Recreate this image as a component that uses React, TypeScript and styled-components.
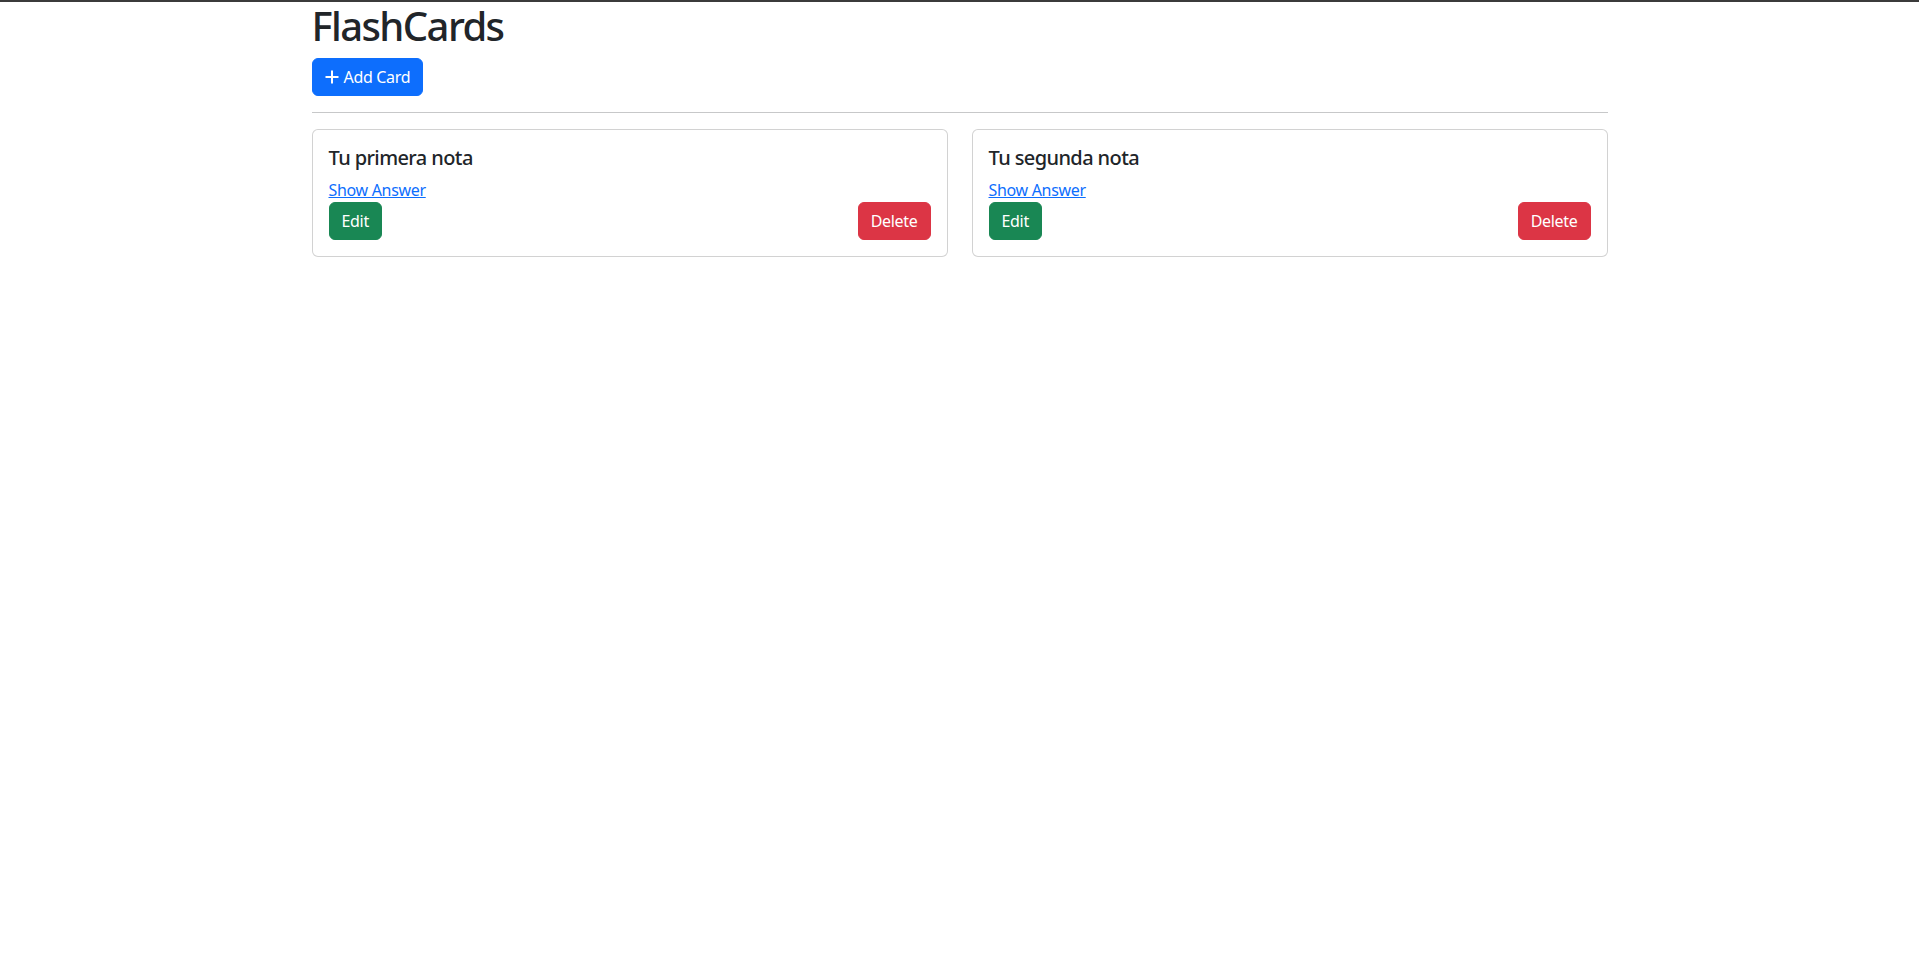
import React from "react";
import styled, { createGlobalStyle } from "styled-components";

const GlobalStyle = createGlobalStyle`
  html, body {
    margin: 0;
    padding: 0;
    background: #ffffff;
  }
  body {
    font-family: "Noto Sans", "Open Sans", Roboto, sans-serif;
    font-size: 16px;
    line-height: 1.5;
    letter-spacing: -0.02em;
    color: #212529;
    border-top: 2px solid #3b3b3b;
  }
  *, *::before, *::after { box-sizing: border-box; }
`;

const Container = styled.main`
  max-width: 1320px;
  margin: 0 auto;
  padding: 0 12px;
`;

const Title = styled.h1`
  margin: 0 0 8px;
  font-size: 40px;
  font-weight: 500;
  line-height: 1.2;
  letter-spacing: -0.04em;
  color: #212529;
`;

type Variant = "primary" | "success" | "danger";

const colors: Record<Variant, string> = {
  primary: "#0d6efd",
  success: "#198754",
  danger: "#dc3545",
};

const Button = styled.button<{ $variant: Variant }>`
  display: inline-flex;
  align-items: center;
  gap: 5px;
  padding: 6px 12px;
  font-family: inherit;
  font-size: 16px;
  line-height: 1.5;
  letter-spacing: inherit;
  font-weight: 400;
  color: #ffffff;
  background: ${(p) => colors[p.$variant]};
  border: 1px solid ${(p) => colors[p.$variant]};
  border-radius: 6px;
  cursor: pointer;
`;

const Divider = styled.hr`
  margin: 16px 0;
  border: 0;
  border-top: 1px solid #212529;
  opacity: 0.25;
`;

const CardGrid = styled.section`
  display: grid;
  grid-template-columns: 1fr 1fr;
  gap: 24px;
`;

const Card = styled.article`
  border: 1px solid rgba(0, 0, 0, 0.175);
  border-radius: 6px;
  padding: 16px;
  background: #ffffff;
`;

const CardTitle = styled.h5`
  margin: 0 0 8px;
  font-size: 20px;
  font-weight: 500;
  line-height: 1.2;
  letter-spacing: -0.03em;
  color: #212529;
`;

const AnswerLink = styled.a`
  display: inline-block;
  color: #0d6efd;
  text-decoration: underline;
  font-size: 16px;
  line-height: 1.5;
  cursor: pointer;
`;

const Actions = styled.div`
  display: flex;
  justify-content: space-between;
  align-items: center;
`;

const PlusIcon = () => (
  <svg width="14" height="14" viewBox="0 0 14 14" aria-hidden="true">
    <path d="M7 0.5v13M0.5 7h13" stroke="#ffffff" strokeWidth="2" fill="none" />
  </svg>
);

const cards = [
  { id: 1, question: "Tu primera nota" },
  { id: 2, question: "Tu segunda nota" },
];

export default function App() {
  return (
    <>
      <GlobalStyle />
      <Container>
        <Title>FlashCards</Title>
        <Button $variant="primary">
          <PlusIcon />
          Add Card
        </Button>
        <Divider />
        <CardGrid>
          {cards.map((c) => (
            <Card key={c.id}>
              <CardTitle>{c.question}</CardTitle>
              <div>
                <AnswerLink href="#">Show Answer</AnswerLink>
              </div>
              <Actions>
                <Button $variant="success">Edit</Button>
                <Button $variant="danger">Delete</Button>
              </Actions>
            </Card>
          ))}
        </CardGrid>
      </Container>
    </>
  );
}
